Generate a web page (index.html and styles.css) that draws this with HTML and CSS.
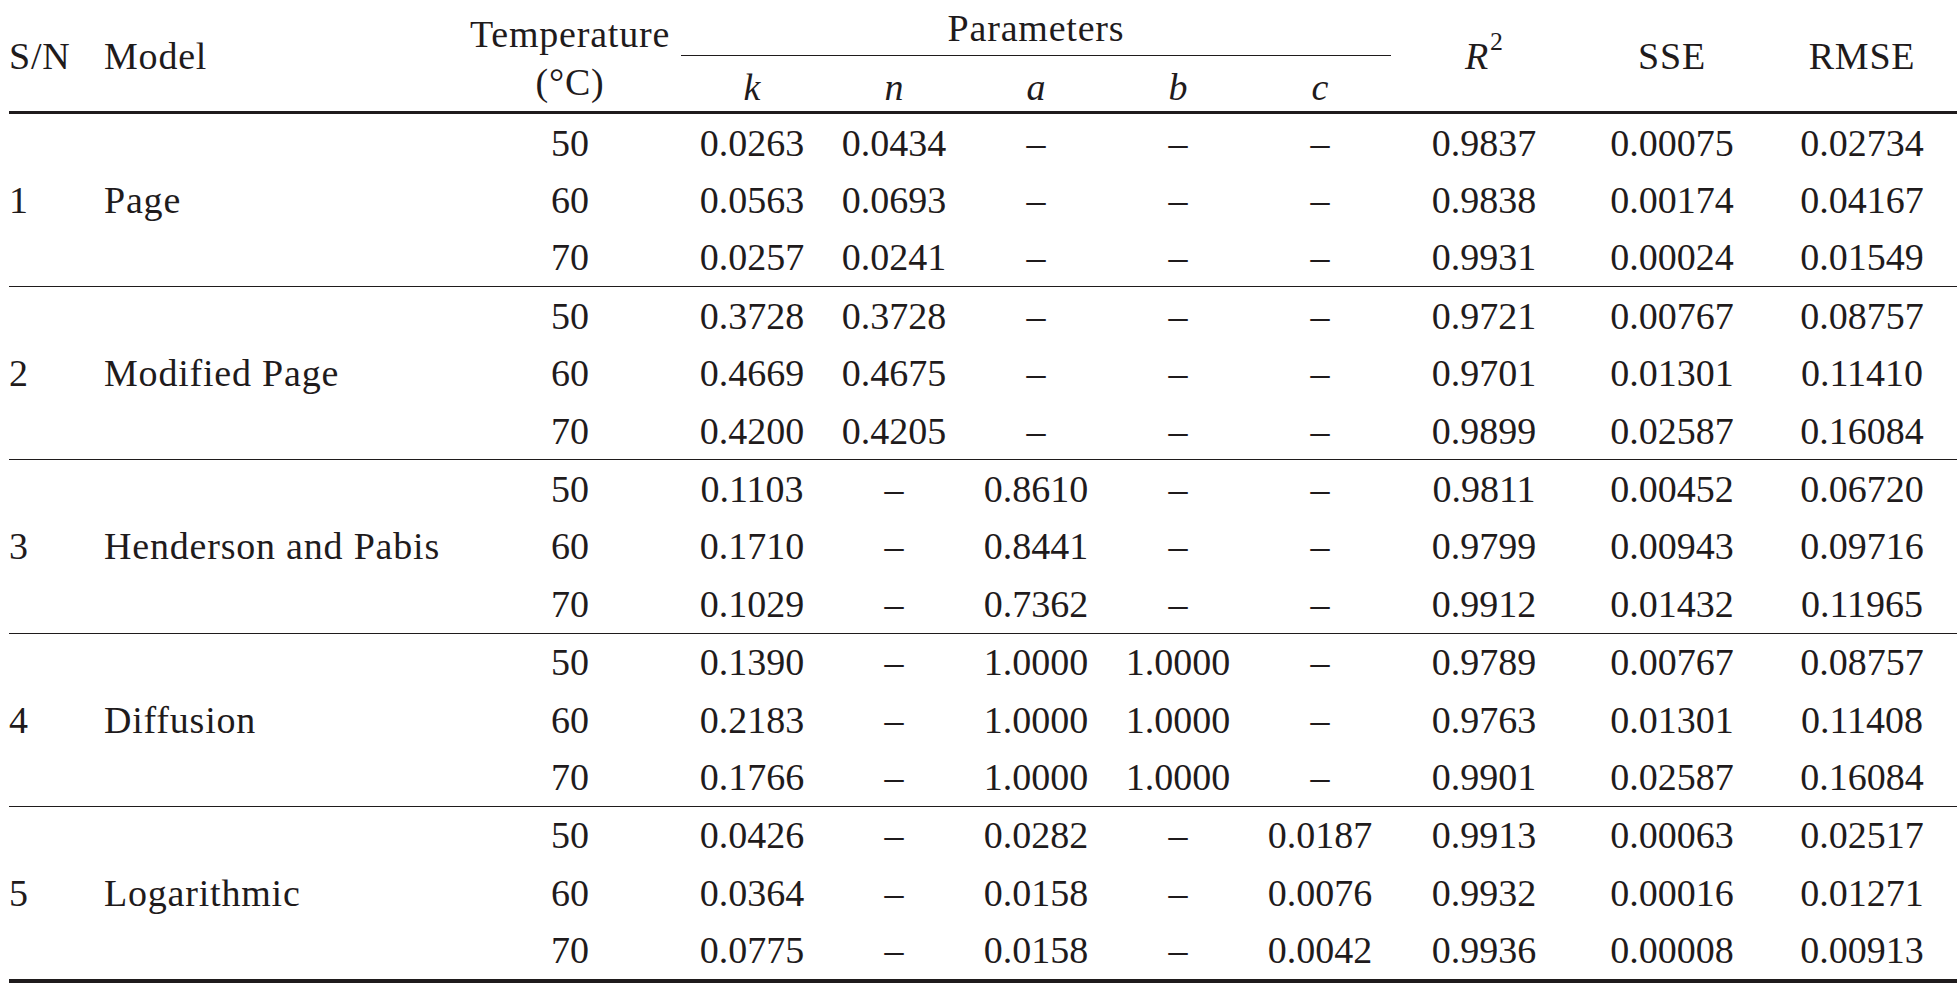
FILE: index.html
```html
<!DOCTYPE html>
<html lang="en">
<head>
<meta charset="utf-8">
<title>Model parameters</title>
<link rel="stylesheet" href="styles.css">
</head>
<body>
<table class="data">
  <colgroup>
    <col class="c-sn"><col class="c-model"><col class="c-temp">
    <col class="c-p"><col class="c-p"><col class="c-p"><col class="c-p"><col class="c-p">
    <col class="c-r2"><col class="c-sse"><col class="c-rmse">
  </colgroup>
  <thead>
    <tr class="h1">
      <th rowspan="2" class="left txt">S/N</th>
      <th rowspan="2" class="left txt">Model</th>
      <th rowspan="2" class="temp txt">Temperature<br>(°C)</th>
      <th colspan="5" class="params txt">Parameters</th>
      <th rowspan="2" class="txt"><i>R</i><sup>2</sup></th>
      <th rowspan="2" class="txt">SSE</th>
      <th rowspan="2" class="txt">RMSE</th>
    </tr>
    <tr class="h2">
      <th class="sym"><i>k</i></th>
      <th class="sym"><i>n</i></th>
      <th class="sym"><i>a</i></th>
      <th class="sym"><i>b</i></th>
      <th class="sym"><i>c</i></th>
    </tr>
  </thead>
  <tbody class="grp">
    <tr><td rowspan="3" class="left">1</td><td rowspan="3" class="left txt">Page</td><td>50</td><td>0.0263</td><td>0.0434</td><td>–</td><td>–</td><td>–</td><td>0.9837</td><td>0.00075</td><td>0.02734</td></tr>
    <tr><td>60</td><td>0.0563</td><td>0.0693</td><td>–</td><td>–</td><td>–</td><td>0.9838</td><td>0.00174</td><td>0.04167</td></tr>
    <tr><td>70</td><td>0.0257</td><td>0.0241</td><td>–</td><td>–</td><td>–</td><td>0.9931</td><td>0.00024</td><td>0.01549</td></tr>
  </tbody>
  <tbody class="grp">
    <tr><td rowspan="3" class="left">2</td><td rowspan="3" class="left txt">Modified Page</td><td>50</td><td>0.3728</td><td>0.3728</td><td>–</td><td>–</td><td>–</td><td>0.9721</td><td>0.00767</td><td>0.08757</td></tr>
    <tr><td>60</td><td>0.4669</td><td>0.4675</td><td>–</td><td>–</td><td>–</td><td>0.9701</td><td>0.01301</td><td>0.11410</td></tr>
    <tr><td>70</td><td>0.4200</td><td>0.4205</td><td>–</td><td>–</td><td>–</td><td>0.9899</td><td>0.02587</td><td>0.16084</td></tr>
  </tbody>
  <tbody class="grp">
    <tr><td rowspan="3" class="left">3</td><td rowspan="3" class="left txt">Henderson and Pabis</td><td>50</td><td>0.1103</td><td>–</td><td>0.8610</td><td>–</td><td>–</td><td>0.9811</td><td>0.00452</td><td>0.06720</td></tr>
    <tr><td>60</td><td>0.1710</td><td>–</td><td>0.8441</td><td>–</td><td>–</td><td>0.9799</td><td>0.00943</td><td>0.09716</td></tr>
    <tr><td>70</td><td>0.1029</td><td>–</td><td>0.7362</td><td>–</td><td>–</td><td>0.9912</td><td>0.01432</td><td>0.11965</td></tr>
  </tbody>
  <tbody class="grp">
    <tr><td rowspan="3" class="left">4</td><td rowspan="3" class="left txt">Diffusion</td><td>50</td><td>0.1390</td><td>–</td><td>1.0000</td><td>1.0000</td><td>–</td><td>0.9789</td><td>0.00767</td><td>0.08757</td></tr>
    <tr><td>60</td><td>0.2183</td><td>–</td><td>1.0000</td><td>1.0000</td><td>–</td><td>0.9763</td><td>0.01301</td><td>0.11408</td></tr>
    <tr><td>70</td><td>0.1766</td><td>–</td><td>1.0000</td><td>1.0000</td><td>–</td><td>0.9901</td><td>0.02587</td><td>0.16084</td></tr>
  </tbody>
  <tbody class="grp last">
    <tr><td rowspan="3" class="left">5</td><td rowspan="3" class="left txt">Logarithmic</td><td>50</td><td>0.0426</td><td>–</td><td>0.0282</td><td>–</td><td>0.0187</td><td>0.9913</td><td>0.00063</td><td>0.02517</td></tr>
    <tr><td>60</td><td>0.0364</td><td>–</td><td>0.0158</td><td>–</td><td>0.0076</td><td>0.9932</td><td>0.00016</td><td>0.01271</td></tr>
    <tr><td>70</td><td>0.0775</td><td>–</td><td>0.0158</td><td>–</td><td>0.0042</td><td>0.9936</td><td>0.00008</td><td>0.00913</td></tr>
  </tbody>
</table>
</body>
</html>
```
FILE: styles.css
```css
html, body {
  margin: 0;
  padding: 0;
  background: #ffffff;
}

body {
  font-family: "Liberation Serif", "Times New Roman", serif;
  font-size: 38px;
  color: #1f1b1c;
}

.data {
  margin-left: 9px;
  width: 1948px;
  table-layout: fixed;
  border-collapse: collapse;
}

.c-sn { width: 95px; }
.c-model { width: 355px; }
.c-temp { width: 222px; }
.c-p { width: 142px; }
.c-r2 { width: 186px; }
.c-sse { width: 190px; }
.c-rmse { width: 190px; }

th, td {
  padding: 0;
  font-weight: normal;
  text-align: center;
  vertical-align: middle;
  white-space: nowrap;
  line-height: 1;
}

.left { text-align: left; }

.txt { letter-spacing: 0.8px; }

thead {
  border-bottom: 3px solid #1f1b1c;
}

.h1 th { height: 55px; }
.h2 th { height: 48px; }

.params {
  border-bottom: 1px solid #1f1b1c;
}

.temp {
  line-height: 48px;
  padding-top: 5px;
}

.sym {
  padding-top: 7px;
}

sup {
  font-size: 0.68em;
  line-height: 0;
  vertical-align: 0.72em;
  letter-spacing: 0;
  margin-left: 1px;
}

tbody td {
  height: 57.4px;
}

.grp {
  border-bottom: 1px solid #1f1b1c;
}

.grp.last {
  border-bottom: 4px solid #1f1b1c;
}
```
